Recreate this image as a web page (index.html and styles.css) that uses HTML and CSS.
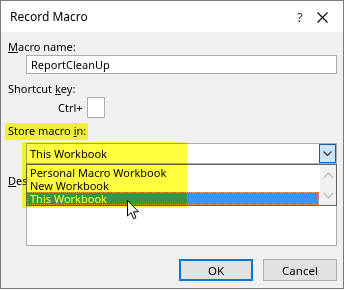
FILE: index.html
```html
<!DOCTYPE html>
<html lang="en">
<head>
    <meta charset="UTF-8">
    <meta name="viewport" content="width=device-width, initial-scale=1.0">
    <title>Record Macro</title>
    <link rel="stylesheet" href="styles.css">
</head>
<body>
  <div class="dialog">
    <div class="titlebar">
      <span class="title">Record Macro</span>
      <span class="help">?</span>
      <span class="close">
        <svg width="11" height="11" viewBox="0 0 11 11"><path d="M0.5 0.5 L10.5 10.5 M10.5 0.5 L0.5 10.5" stroke="#000" stroke-width="1.1"/></svg>
      </span>
    </div>

    <div class="content">
      <div class="label"><u>M</u>acro name:</div>
      <div class="field name-field">ReportCleanUp</div>

      <div class="label shortcut-label">Shortcut <u>k</u>ey:</div>
      <div class="ctrl-row">
        <span>Ctrl+</span>
        <span class="key-box"></span>
      </div>

      <div class="label store-label">Store macro <u>i</u>n:</div>
      <div class="combo">
        <span class="combo-text">This Workbook</span>
        <span class="combo-btn">
          <svg width="9" height="5" viewBox="0 0 9 5"><path d="M0.5 0.5 L4.5 4.5 L8.5 0.5" fill="none" stroke="#333" stroke-width="1.2"/></svg>
        </span>
      </div>

      <div class="label desc-label"><u>D</u>escription:</div>
      <div class="field desc-field"></div>

      <div class="buttons">
        <button class="btn btn-ok">OK</button>
        <button class="btn">Cancel</button>
      </div>
    </div>

    <!-- open dropdown list sits over the description -->
    <div class="dropdown">
      <div class="items">
        <div class="item">Personal Macro Workbook</div>
        <div class="item">New Workbook</div>
        <div class="item selected">This Workbook</div>
      </div>
      <div class="scrollbar">
        <svg width="11" height="7" viewBox="0 0 11 7"><path d="M0.7 6 L5.5 1.2 L10.3 6" fill="none" stroke="#c2c2c2" stroke-width="1.6"/></svg>
        <svg width="11" height="7" viewBox="0 0 11 7"><path d="M0.7 1 L5.5 5.8 L10.3 1" fill="none" stroke="#c2c2c2" stroke-width="1.6"/></svg>
      </div>
    </div>

    <div class="highlight hl-store"></div>
    <div class="highlight hl-combo"></div>

    <svg class="cursor" width="13" height="20" viewBox="0 0 13 20">
      <path d="M0.5 0.5 L0.5 16 L4 12.6 L6.6 18.6 L9 17.6 L6.5 11.8 L11.5 11.8 Z" fill="#fff" stroke="#000" stroke-width="1"/>
    </svg>
  </div>
</body>
</html>
```

FILE: styles.css
```css
body {
  margin: 0;
  background-color: #fff;
  font-family: "Noto Sans", "Open Sans", sans-serif;
  font-size: 11px;
  color: #000;
}

.dialog {
  position: relative;
  width: 342px;
  height: 287px;
  border: 1px solid #7a7a7a;
  background-color: #f0f0f0;
  display: flex;
  flex-direction: column;
}

.titlebar {
  height: 31px;
  background-color: #fff;
  display: flex;
  align-items: center;
  font-size: 12px;
}

.title {
  padding-left: 9px;
  flex: 1;
}

.help {
  width: 20px;
  font-size: 13px;
  color: #333;
}

.close {
  width: 26px;
  padding-top: 3px;
}

.content {
  padding: 7px 6px 0 7px;
  display: flex;
  flex-direction: column;
}

.label {
  height: 16px;
  line-height: 16px;
}

.field {
  margin-left: 18px;
  background-color: #fff;
  border: 1px solid #adadad;
}

.name-field {
  height: 17px;
  line-height: 17px;
  padding-left: 4px;
}

.shortcut-label {
  margin-top: 7px;
}

.ctrl-row {
  display: flex;
  align-items: center;
  margin-left: 50px;
  height: 20px;
}

.key-box {
  width: 16px;
  height: 19px;
  margin-left: 4px;
  background-color: #fff;
  border: 1px solid #adadad;
}

.store-label {
  margin-top: 6px;
}

.combo {
  margin-top: 4px;
  margin-left: 18px;
  height: 19px;
  background-color: #fff;
  border: 1px solid #adadad;
  display: flex;
  align-items: center;
}

.combo-text {
  flex: 1;
  padding-left: 3px;
}

.combo-btn {
  width: 15px;
  height: 17px;
  border: 1px solid #1d5b9c;
  background-color: #cce4f7;
  display: flex;
  align-items: center;
  justify-content: center;
}

.desc-label {
  margin-top: 9px;
}

.desc-field {
  height: 55px;
}

.buttons {
  display: flex;
  justify-content: flex-end;
  gap: 10px;
  margin-top: 13px;
}

.btn {
  width: 74px;
  height: 22px;
  font-family: inherit;
  font-size: 11.5px;
  background-color: #e1e1e1;
  border: 1px solid #adadad;
  padding: 0;
  color: #000;
}

.btn-ok {
  border: 2px solid #0078d7;
}

.dropdown {
  position: absolute;
  top: 163px;
  left: 25px;
  width: 309px;
  height: 40px;
  border: 1px solid #646464;
  background-color: #fff;
  display: flex;
}

.items {
  flex: 1;
  padding-top: 1px;
}

.item {
  height: 13px;
  line-height: 13px;
  padding-left: 3px;
}

.item.selected {
  background-color: #3399ff;
  color: #fff;
  outline: 1px dotted #e8a050;
  outline-offset: -1px;
  margin-right: 1px;
}

.scrollbar {
  width: 16px;
  background-color: #f0f0f0;
  display: flex;
  flex-direction: column;
  justify-content: space-around;
  align-items: center;
}

.highlight {
  position: absolute;
  background-color: #ffff40;
  mix-blend-mode: multiply;
}

.hl-store {
  top: 122px;
  left: 4px;
  width: 83px;
  height: 17px;
}

.hl-combo {
  top: 141px;
  left: 21px;
  width: 165px;
  height: 66px;
}

.cursor {
  position: absolute;
  top: 199px;
  left: 126px;
}
```
